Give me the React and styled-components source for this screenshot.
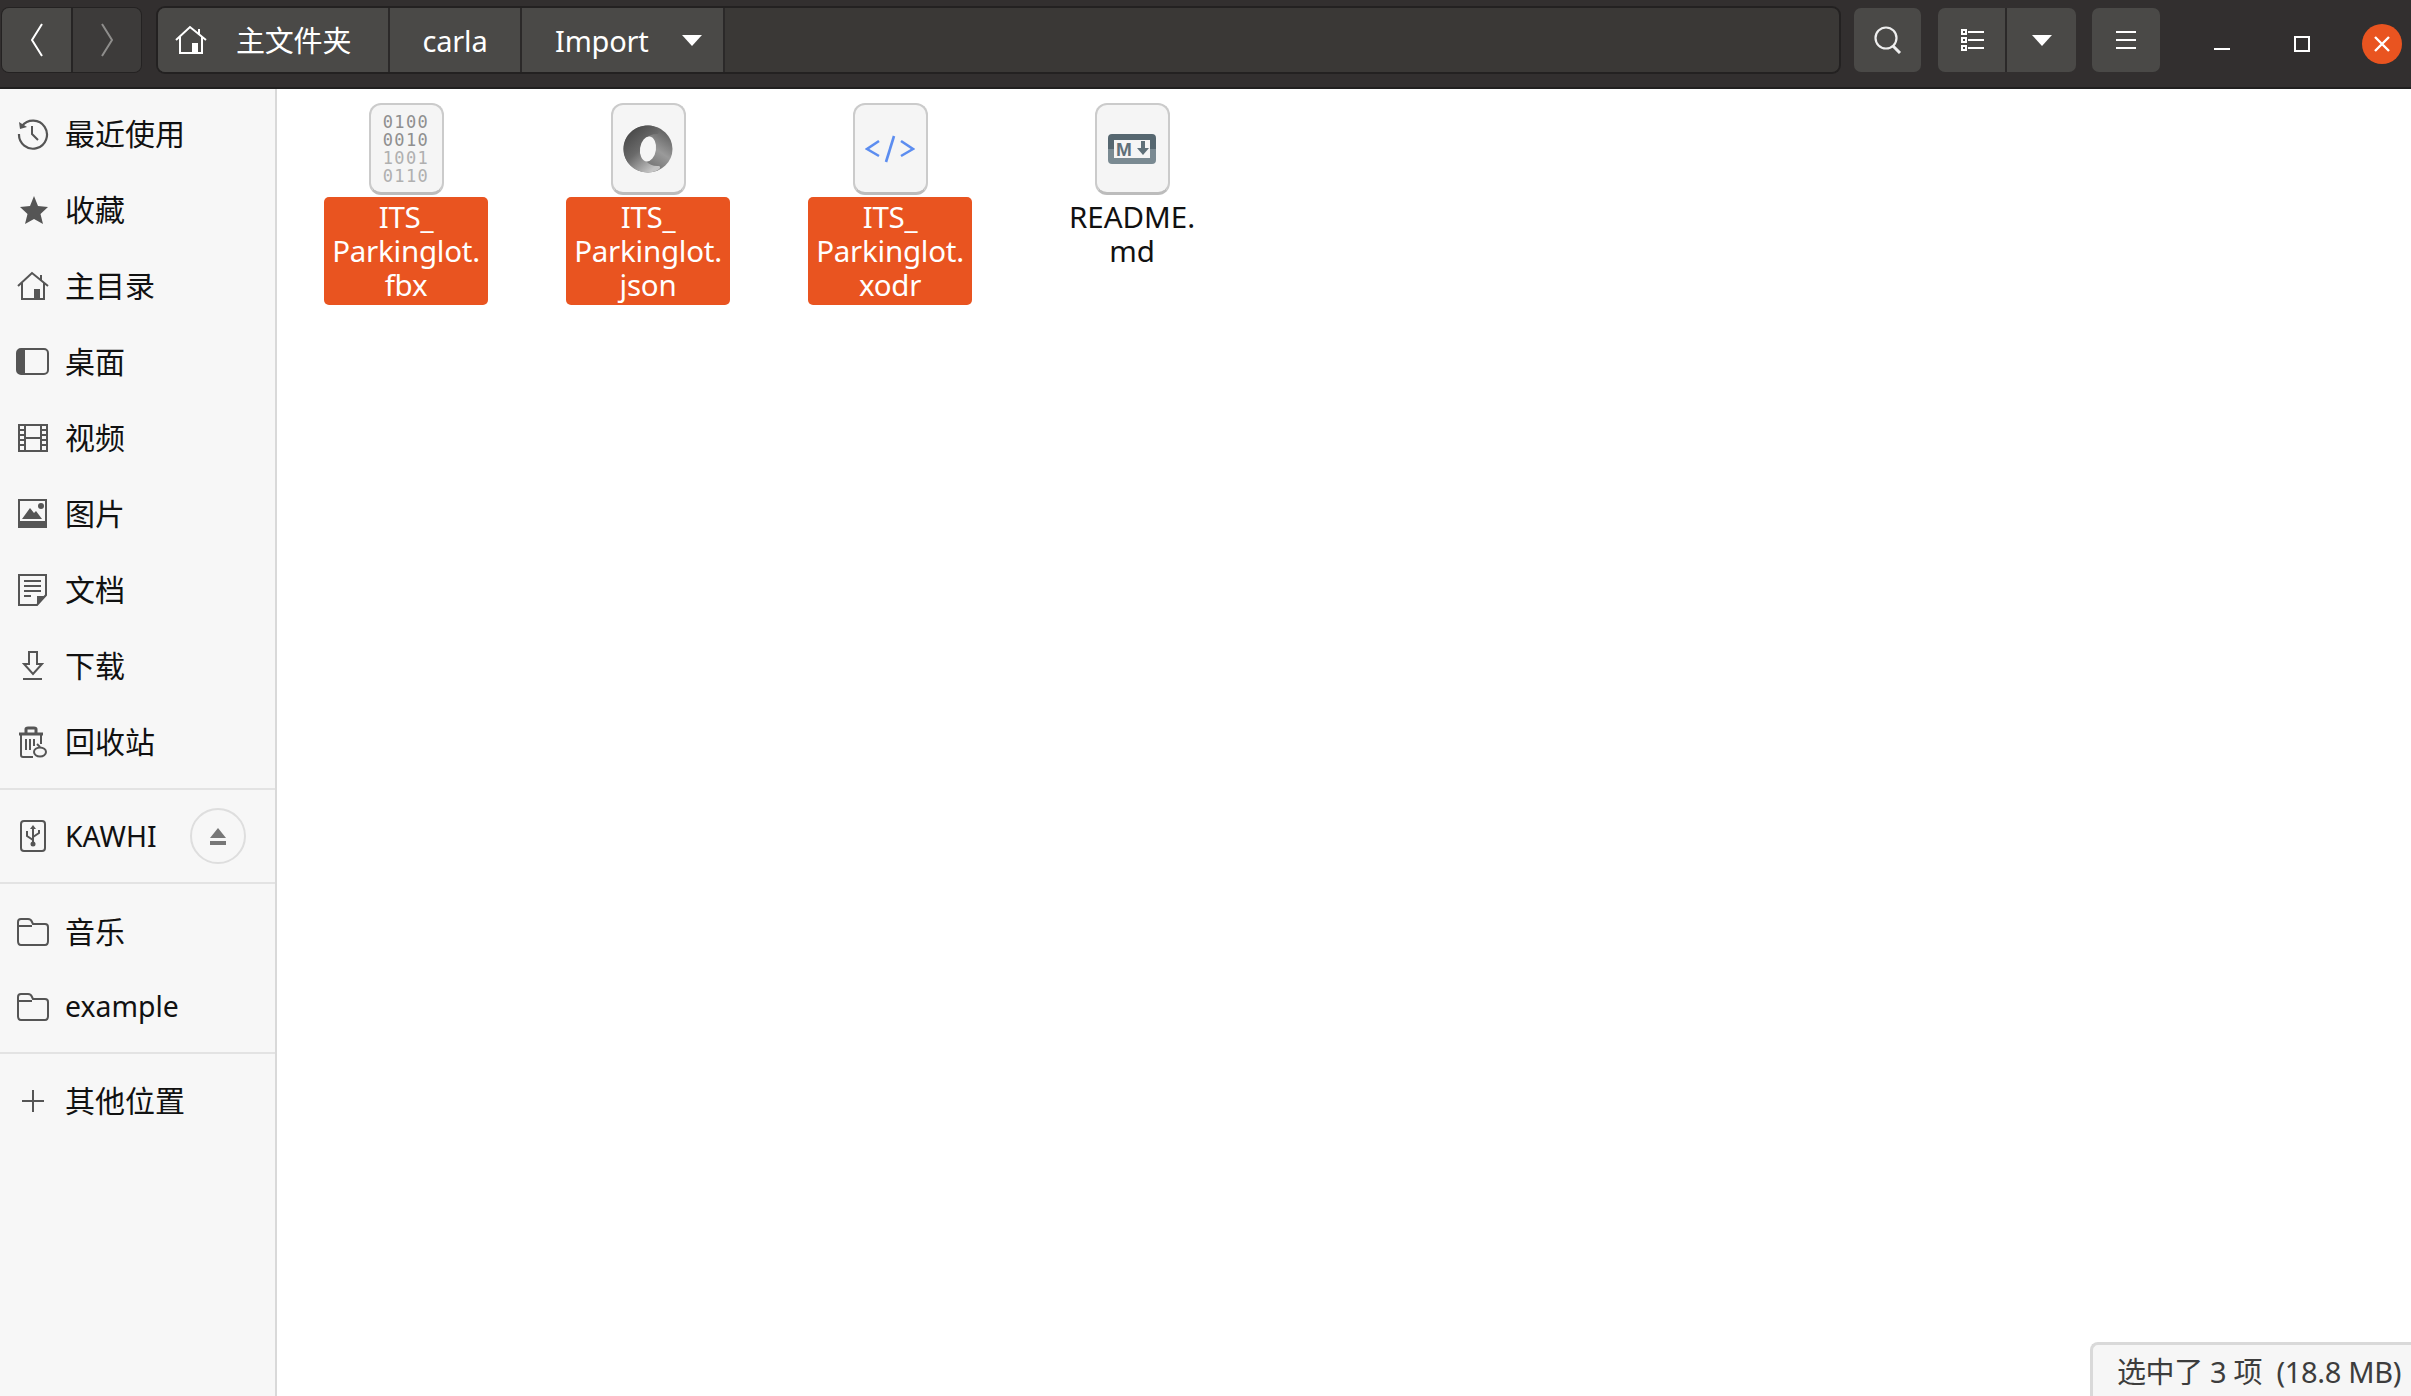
import styled, { createGlobalStyle } from 'styled-components';

const GlobalStyle = createGlobalStyle`
  html, body {
    margin: 0;
    padding: 0;
    background: #fff;
  }
  body {
    font-family: "Noto Sans", "Noto Sans CJK SC", sans-serif;
  }
  * {
    box-sizing: border-box;
  }
`;

const cjk = `"Noto Sans", "Noto Sans CJK SC", sans-serif`;

const Window = styled.div`
  width: 2411px;
  height: 1396px;
  display: flex;
  flex-direction: column;
  overflow: hidden;
`;

const HeaderBar = styled.header`
  height: 89px;
  flex: none;
  display: flex;
  align-items: center;
  padding: 0 9px 7px 2px;
  background: #322f2f;
  border-bottom: 2px solid #201f1f;
  color: #fff;
`;

const NavGroup = styled.div`
  width: 139px;
  height: 64px;
  flex: none;
  display: flex;
  border-radius: 7px;
  overflow: hidden;
  box-shadow: 0 0 0 1px #242222;
`;

const NavButton = styled.div`
  flex: ${p => (p.$back ? '0 0 71px' : '1')};
  display: flex;
  align-items: center;
  justify-content: center;
  background: ${p => (p.$back ? '#4a4947' : '#3d3b3a')};
  border-right: ${p => (p.$back ? '2px solid #262424' : 'none')};
`;

const PathBar = styled.div`
  width: 1681px;
  height: 64px;
  margin-left: 17px;
  flex: none;
  display: flex;
  border-radius: 7px;
  overflow: hidden;
  background: #3a3836;
  box-shadow: 0 0 0 2px #232121;
`;

const Crumb = styled.div`
  width: ${p => p.$width}px;
  flex: none;
  display: flex;
  align-items: center;
  justify-content: ${p => (p.$center ? 'center' : 'flex-start')};
  gap: ${p => p.$gap || 0}px;
  padding-left: ${p => p.$pad || 0}px;
  background: #4a4947;
  border-right: 2px solid #2b2929;
  font-family: ${cjk};
  font-size: 29px;
  line-height: 1;
  letter-spacing: -0.2px;
  white-space: nowrap;
`;

const ToolButton = styled.div`
  width: ${p => p.$width || 67}px;
  height: 64px;
  margin-left: ${p => p.$left || 0}px;
  flex: none;
  display: flex;
  align-items: center;
  justify-content: center;
  background: #4a4947;
  border-radius: ${p => p.$radius || '7px'};
  border-right: ${p => (p.$split ? '2px solid #2b2929' : 'none')};
`;

const WindowControl = styled.div`
  width: ${p => p.$width}px;
  height: 40px;
  margin-left: ${p => p.$left}px;
  margin-top: 7px;
  flex: none;
  display: flex;
  align-items: center;
  justify-content: center;
`;

const CloseCircle = styled(WindowControl)`
  border-radius: 50%;
  background: #e95420;
`;

const Body = styled.main`
  flex: 1;
  display: flex;
  min-height: 0;
`;

const Sidebar = styled.aside`
  width: 277px;
  flex: none;
  background: #f7f7f7;
  border-right: 2px solid #d9d9d9;
  color: #111;
`;

const SideSection = styled.div`
  padding: ${p => p.$pad};
  border-bottom: ${p => (p.$last ? 'none' : '2px solid #e3e3e3')};
`;

const SideRow = styled.div`
  height: ${p => p.$height || 76}px;
  display: flex;
  align-items: center;
  padding-left: 14px;
  font-family: ${cjk};
  font-size: ${p => (p.$latin ? '28.4px' : '30px')};
  line-height: 1;
  white-space: nowrap;
`;

const SideIcon = styled.span`
  width: 38px;
  height: 38px;
  margin-right: 13px;
  flex: none;
  display: flex;
  align-items: center;
  justify-content: center;
`;

const EjectButton = styled.div`
  width: 56px;
  height: 56px;
  margin-left: 33px;
  display: flex;
  align-items: center;
  justify-content: center;
  border-radius: 50%;
  border: 2px solid #dedede;
`;

const Content = styled.section`
  flex: 1;
  position: relative;
  display: flex;
  align-items: flex-start;
  padding: 14px 0 0 8px;
  background: #fff;
`;

const FileCell = styled.div`
  width: 242px;
  flex: none;
  display: flex;
  flex-direction: column;
  align-items: center;
`;

const FileIconBox = styled.div`
  width: 75px;
  height: 92px;
  display: flex;
  align-items: center;
  justify-content: center;
  background: #f5f5f5;
  border: 2px solid #cbcbcb;
  border-bottom: 3px solid #bcbcbc;
  border-radius: 12px;
`;

const FileLabel = styled.div`
  min-width: 164px;
  margin-top: 2px;
  padding: 3px 6px 3px;
  border-radius: 5px;
  background: ${p => (p.$selected ? '#e95420' : 'transparent')};
  color: ${p => (p.$selected ? '#fff' : '#111')};
  font-size: 29.5px;
  line-height: 34px;
  text-align: center;
  letter-spacing: ${p => (p.$selected ? '-0.25px' : '0')};
  white-space: nowrap;
`;

const StatusPill = styled.div`
  position: absolute;
  right: 0;
  bottom: 0;
  height: 54px;
  padding: 2px 10px 0 24px;
  display: flex;
  align-items: center;
  background: #f6f6f6;
  border: 3px solid #d9d9d9;
  border-width: 3px 0 0 3px;
  border-top-left-radius: 8px;
  color: #3d3d3d;
  font-family: ${cjk};
  font-size: 29px;
  line-height: 1;
  letter-spacing: -0.35px;
  white-space: pre;
`;

const ICON = '#555';

const Svg = ({ w = 32, h = 32, children }) => (
  <svg width={w} height={h} viewBox={`0 0 ${w} ${h}`} fill="none">{children}</svg>
);

const HomeGlyph = ({ color = ICON, w = 32, h = 30 }) => (
  <svg width={w} height={h} viewBox="0 0 32 30" fill="none" stroke={color} strokeWidth="2">
    <path d="M1 15 L15 2 L31 15 M5 12 V28 H27 V12" />
    <path d="M24 4 V10" />
    <path d="M17 28 V18 H23 V28 Z" fill={color} stroke="none" />
  </svg>
);

const FolderGlyph = () => (
  <Svg w={34} h={30}>
    <path d="M2 24 V5 Q2 2 5 2 H12 Q15 2 16 5 L17 7 H29 Q32 7 32 10 V24 Q32 28 29 28 H5 Q2 28 2 24 Z M2 9 H16" stroke={ICON} strokeWidth="2" />
  </Svg>
);

const sideIcons = {
  recent: (
    <Svg>
      <path d="M5 8 A14 14 0 1 1 2 16" stroke={ICON} strokeWidth="2.2" />
      <path d="M2 4 L3 11 L10 9 Z" fill={ICON} />
      <path d="M15 8 V16 L21 22" stroke={ICON} strokeWidth="2" />
    </Svg>
  ),
  star: (
    <Svg>
      <path d="M17 2 L21 12 L31 13 L23.5 20 L26 30 L17 25 L8 30 L10.5 20 L3 13 L13 12 Z" fill={ICON} />
    </Svg>
  ),
  home: <HomeGlyph />,
  desktop: (
    <Svg w={34} h={28}>
      <rect x="1" y="1" width="31" height="25" rx="4" stroke={ICON} strokeWidth="2" />
      <path d="M1 5 Q1 1 5 1 H9 V26 H5 Q1 26 1 22 Z" fill={ICON} />
    </Svg>
  ),
  video: (
    <Svg w={32} h={30}>
      <rect x="2" y="2" width="28" height="26" stroke={ICON} strokeWidth="2" />
      <path d="M8 2 V28 M24 2 V28 M8 15 H24" stroke={ICON} strokeWidth="2" />
      <path d="M2 7 H8 M2 12 H8 M2 17 H8 M2 22 H8 M24 7 H30 M24 12 H30 M24 17 H30 M24 22 H30" stroke={ICON} strokeWidth="2" />
    </Svg>
  ),
  pictures: (
    <Svg w={30} h={30}>
      <rect x="1" y="1" width="27" height="27" stroke={ICON} strokeWidth="2" />
      <path d="M1 22 H28 V28 H1 Z" fill={ICON} />
      <path d="M4 20 L12 9 L16 14 L18 12 L24 20 Z" fill={ICON} />
      <circle cx="23" cy="7" r="3" fill={ICON} />
    </Svg>
  ),
  docs: (
    <Svg w={30} h={32}>
      <path d="M1 1 H28 V21 L19 31 H1 Z" stroke={ICON} strokeWidth="2" />
      <path d="M19 31 V22 H28 Z" fill={ICON} />
      <path d="M6 7 H23 M6 12 H23 M6 17 H23 M6 22 H13" stroke={ICON} strokeWidth="2" />
    </Svg>
  ),
  download: (
    <Svg w={22} h={30}>
      <path d="M7 1 H15 V13 H20 L11 23 L2 13 H7 Z" stroke={ICON} strokeWidth="2" />
      <path d="M1 28 H20" stroke={ICON} strokeWidth="2" />
    </Svg>
  ),
  trash: (
    <Svg w={32} h={32}>
      <path d="M2 8 H26 M9 8 V3 Q9 2 11 2 H17 Q19 2 19 3 V8" stroke={ICON} strokeWidth="3" />
      <path d="M4 8 V29 Q4 31 6 31 H16 M24 8 V18" stroke={ICON} strokeWidth="2" />
      <path d="M9 13 V24 M13 13 V24 M17 13 V20" stroke={ICON} strokeWidth="2" />
      <ellipse cx="23" cy="26" rx="6" ry="4.5" stroke={ICON} strokeWidth="2" />
      <path d="M23 21 L20 18" stroke={ICON} strokeWidth="2" />
    </Svg>
  ),
  usb: (
    <Svg w={28} h={34}>
      <rect x="2" y="2" width="24" height="30" rx="3" stroke={ICON} strokeWidth="2" />
      <path d="M14 8 V26 M14 21 L8 17 V12 M14 18 L20 14 V11" stroke={ICON} strokeWidth="2" />
      <circle cx="14" cy="25" r="2.5" fill={ICON} />
      <path d="M11 10 L14 6 L17 10 Z" fill={ICON} />
    </Svg>
  ),
  plus: (
    <Svg w={24} h={24}>
      <path d="M12 1 V23 M1 12 H23" stroke={ICON} strokeWidth="2" />
    </Svg>
  ),
};

const placeRows = [
  ['recent', '最近使用'],
  ['star', '收藏'],
  ['home', '主目录'],
  ['desktop', '桌面'],
  ['video', '视频'],
  ['pictures', '图片'],
  ['docs', '文档'],
  ['download', '下载'],
  ['trash', '回收站'],
];

const BinaryIcon = () => (
  <svg width="60" height="80" viewBox="0 0 60 80">
    {[['0100', '#8f8f8f'], ['0010', '#8f8f8f'], ['1001', '#b0b0b0'], ['0110', '#b0b0b0']].map(([bits, fill], i) => (
      <text key={bits} x="30" y={19 + i * 18} textAnchor="middle" fontFamily="'DejaVu Sans Mono', monospace" fontSize="17" fill={fill} letterSpacing="1.4">{bits}</text>
    ))}
  </svg>
);

const JsonIcon = () => (
  <svg width="50" height="48" viewBox="0 0 50 48">
    <defs>
      <linearGradient id="jsonDark" x1="0" y1="0" x2="0.7" y2="1">
        <stop offset="0" stopColor="#3c3c3c" />
        <stop offset="0.55" stopColor="#6a6a6a" />
        <stop offset="1" stopColor="#c4c4c4" />
      </linearGradient>
      <linearGradient id="jsonLight" x1="1" y1="0" x2="0.3" y2="1">
        <stop offset="0" stopColor="#4a4a4a" />
        <stop offset="0.5" stopColor="#9a9a9a" />
        <stop offset="1" stopColor="#5c5c5c" />
      </linearGradient>
    </defs>
    <ellipse cx="25" cy="24" rx="24.5" ry="23.5" fill="url(#jsonLight)" />
    <path d="M25 .5 C11 .5 .5 11 .5 24 C.5 36 10 47.5 25 47.5 C33 47.5 40 43 36 41 C26 42 19 34 18 26 C17 17 24 9 34 9 C38 9 36 .5 25 .5 Z" fill="url(#jsonDark)" />
    <ellipse cx="25" cy="24" rx="8" ry="12.5" transform="rotate(8 25 24)" fill="#f5f5f5" />
  </svg>
);

const CodeIcon = () => (
  <svg width="50" height="28" viewBox="0 0 50 28" fill="none" stroke="#5c8df0" strokeWidth="2.6">
    <path d="M14 6 L2 14 L14 21" />
    <path d="M29 1 L21 27" />
    <path d="M36 6 L48 14 L36 21" />
  </svg>
);

const MarkdownIcon = () => (
  <svg width="48" height="30" viewBox="0 0 48 30" fill="none">
    <defs>
      <linearGradient id="mdFill" x1="0" y1="0" x2="0" y2="1">
        <stop offset="0.5" stopColor="#566770" />
        <stop offset="0.5" stopColor="#7a8a92" />
      </linearGradient>
    </defs>
    <rect x="3" y="3" width="42" height="24" rx="1" stroke="url(#mdFill)" strokeWidth="6" />
    <text x="16" y="22" textAnchor="middle" fontFamily="'Liberation Sans', sans-serif" fontWeight="700" fontSize="19" fill="#5f7079">M</text>
    <path d="M35 7 V15" stroke="#5f7079" strokeWidth="4" />
    <path d="M29 14 H41 L35 21 Z" fill="#5f7079" />
  </svg>
);

const files = [
  { icon: <BinaryIcon />, lines: ['ITS_', 'Parkinglot.', 'fbx'], selected: true },
  { icon: <JsonIcon />, lines: ['ITS_', 'Parkinglot.', 'json'], selected: true },
  { icon: <CodeIcon />, lines: ['ITS_', 'Parkinglot.', 'xodr'], selected: true },
  { icon: <MarkdownIcon />, lines: ['README.', 'md'], selected: false },
];

export default function App() {
  return (
    <Window>
      <GlobalStyle />
      <HeaderBar>
        <NavGroup>
          <NavButton $back>
            <svg width="14" height="34" viewBox="0 0 14 34" fill="none" stroke="#fff" strokeWidth="2"><path d="M12 1 L2 17 L12 33" /></svg>
          </NavButton>
          <NavButton>
            <svg width="14" height="34" viewBox="0 0 14 34" fill="none" stroke="#8e8d8b" strokeWidth="2"><path d="M2 1 L12 17 L2 33" /></svg>
          </NavButton>
        </NavGroup>
        <PathBar>
          <Crumb $width={232} $pad={17} $gap={29}>
            <HomeGlyph color="#fff" />
            主文件夹
          </Crumb>
          <Crumb $width={132} $center>carla</Crumb>
          <Crumb $width={203} $pad={33} $gap={33}>
            Import
            <svg width="20" height="11" viewBox="0 0 20 11"><path d="M0 0 H20 L10 11 Z" fill="#fff" /></svg>
          </Crumb>
        </PathBar>
        <ToolButton $left={15}>
          <svg width="28" height="28" viewBox="0 0 28 28" fill="none" stroke="#eee" strokeWidth="2.2">
            <circle cx="12" cy="12" r="10.5" />
            <path d="M19 20 L26 27" strokeWidth="3" />
          </svg>
        </ToolButton>
        <ToolButton $left={17} $width={69} $radius="7px 0 0 7px" $split>
          <svg width="24" height="24" viewBox="0 0 24 24" fill="none" stroke="#fff" strokeWidth="2">
            <path d="M2 2 H6 V6 H2 Z M2 10 H6 V14 H2 Z M2 18 H6 V22 H2 Z" />
            <path d="M8 4 H24 M8 12 H24 M8 20 H24" />
          </svg>
        </ToolButton>
        <ToolButton $width={69} $radius="0 7px 7px 0">
          <svg width="20" height="11" viewBox="0 0 20 11"><path d="M0 0 H20 L10 11 Z" fill="#fff" /></svg>
        </ToolButton>
        <ToolButton $left={16} $width={68}>
          <svg width="20" height="18" viewBox="0 0 20 18" stroke="#fff" strokeWidth="2"><path d="M0 1 H20 M0 9 H20 M0 17 H20" /></svg>
        </ToolButton>
        <WindowControl $left={54} $width={16}>
          <svg width="16" height="16" viewBox="0 0 16 16" stroke="#fff" strokeWidth="2"><path d="M0 13 H16" /></svg>
        </WindowControl>
        <WindowControl $left={64} $width={16}>
          <svg width="16" height="16" viewBox="0 0 16 16" fill="none" stroke="#fff" strokeWidth="2"><rect x="1" y="1" width="14" height="14" /></svg>
        </WindowControl>
        <CloseCircle $left={52} $width={40}>
          <svg width="16" height="16" viewBox="0 0 16 16" stroke="#fff" strokeWidth="2.4"><path d="M1 1 L15 15 M15 1 L1 15" /></svg>
        </CloseCircle>
      </HeaderBar>
      <Body>
        <Sidebar>
          <SideSection $pad="7px 0 8px">
            {placeRows.map(([icon, label]) => (
              <SideRow key={label}>
                <SideIcon>{sideIcons[icon]}</SideIcon>
                {label}
              </SideRow>
            ))}
          </SideSection>
          <SideSection $pad="0">
            <SideRow $height={92} $latin>
              <SideIcon>{sideIcons.usb}</SideIcon>
              KAWHI
              <EjectButton>
                <svg width="18" height="18" viewBox="0 0 18 18" fill="#777"><path d="M9 1 L17 11 H1 Z M1 14 H17 V18 H1 Z" /></svg>
              </EjectButton>
            </SideRow>
          </SideSection>
          <SideSection $pad="10px 0 8px">
            <SideRow $height={75}>
              <SideIcon><FolderGlyph /></SideIcon>
              音乐
            </SideRow>
            <SideRow $height={75} $latin>
              <SideIcon><FolderGlyph /></SideIcon>
              example
            </SideRow>
          </SideSection>
          <SideSection $pad="9px 0 0" $last>
            <SideRow>
              <SideIcon>{sideIcons.plus}</SideIcon>
              其他位置
            </SideRow>
          </SideSection>
        </Sidebar>
        <Content>
          {files.map(file => (
            <FileCell key={file.lines.join('')}>
              <FileIconBox>{file.icon}</FileIconBox>
              <FileLabel $selected={file.selected}>
                {file.lines.map(line => <div key={line}>{line}</div>)}
              </FileLabel>
            </FileCell>
          ))}
          <StatusPill>选中了 3 项  (18.8 MB)</StatusPill>
        </Content>
      </Body>
    </Window>
  );
}
